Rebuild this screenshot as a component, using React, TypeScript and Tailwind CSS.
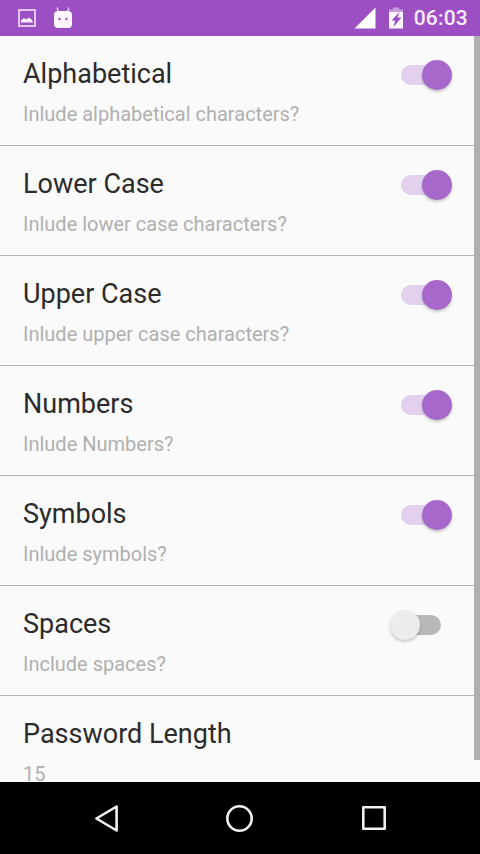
import React from "react";

const rows = [
  { title: "Alphabetical", sub: "Inlude alphabetical characters?", on: true },
  { title: "Lower Case", sub: "Inlude lower case characters?", on: true },
  { title: "Upper Case", sub: "Inlude upper case characters?", on: true },
  { title: "Numbers", sub: "Inlude Numbers?", on: true },
  { title: "Symbols", sub: "Inlude symbols?", on: true },
  { title: "Spaces", sub: "Include spaces?", on: false },
];

const Toggle = ({ on }: { on: boolean }) => (
  <div className="relative w-[62px] h-[32px] shrink-0">
    <div
      className={`absolute top-[5px] left-[11px] h-[20px] w-[40px] rounded-full ${
        on ? "bg-[#e3d0ed]" : "bg-[#b8b8b8]"
      }`}
    />
    <div
      className={`absolute top-0 w-[30px] h-[30px] rounded-full shadow-[0_2px_3px_rgba(0,0,0,0.2)] ${
        on ? "left-[31.5px] bg-[#a768cb]" : "left-0 bg-[#ececec]"
      }`}
    />
  </div>
);

const Row = ({ title, sub, on }: { title: string; sub: string; on: boolean }) => (
  <div className="h-[110px] shrink-0 border-b border-[#b4b4b4] pl-[23px] pr-[28px] flex justify-between">
    <div>
      <div className="mt-[20px] text-[27px] leading-[36px] text-[#2b2b2b]">{title}</div>
      <div className="mt-[8px] text-[20px] leading-[28px] text-[#b0b0b0]">{sub}</div>
    </div>
    <div className="mt-[23.5px]">
      <Toggle on={on} />
    </div>
  </div>
);

export default function App() {
  return (
    <div className="relative w-[480px] h-[854px] flex flex-col overflow-hidden bg-[#fafafa] font-['Roboto',sans-serif]">
      {/* status bar */}
      <div className="h-[36px] shrink-0 bg-[#9c4fc3] flex items-center justify-between pl-[18px] pr-[12px]">
        <div className="flex items-center gap-[18px]">
          <svg width="18" height="18" viewBox="0 0 18 18">
            <rect x="1" y="1" width="16" height="16" fill="none" stroke="#f3e3fa" strokeWidth="1.6" />
            <path d="M3 13.5 L3 11.5 L6 9 L8 10.5 L11 8.5 L14 11 L15 13.5 Z" fill="#f8effc" />
          </svg>
          <svg width="18" height="22" viewBox="0 0 18 22">
            <path d="M4.5 5 L3 0.5 M13.5 5 L15 0.5" stroke="#e6cff2" strokeWidth="1.4" />
            <path d="M0 8 Q0 4 4 4 L14 4 Q18 4 18 8 L18 17 Q18 21 14 21 L4 21 Q0 21 0 17 Z" fill="#fbf6fd" />
            <circle cx="5.5" cy="12" r="1.2" fill="#9c4fc3" />
            <circle cx="12.5" cy="12" r="1.2" fill="#9c4fc3" />
          </svg>
        </div>
        <div className="flex items-center">
          <svg width="22" height="22" viewBox="0 0 22 22" className="mr-[13px]">
            <path d="M0.5 21.5 L21.5 0.5 L21.5 21.5 Z" fill="#ffffff" />
          </svg>
          <svg width="14" height="22" viewBox="0 0 14 22" className="mr-[11px]">
            <path d="M4 0.5 H10 V2.5 H14 V5 H0 V2.5 H4 Z" fill="#c79be0" />
            <path d="M0 5 H14 V21.5 H0 Z" fill="#fbf6fd" />
            <path d="M10.5 5 L2.5 13.5 H6 L4.5 20 L12.5 10.5 H8.5 Z" fill="#9c4fc3" />
          </svg>
          <span className="text-[21px] leading-[36px] font-medium text-[#f6ecfb] tracking-[0.2px]">06:03</span>
        </div>
      </div>

      {/* settings list */}
      <div className="relative flex-1 overflow-hidden">
        {rows.map((r) => (
          <Row key={r.title} title={r.title} sub={r.sub} on={r.on} />
        ))}
        <div className="pl-[23px]">
          <div className="mt-[20px] text-[27px] leading-[36px] text-[#2b2b2b]">Password Length</div>
          <div className="mt-[8px] text-[20px] leading-[28px] text-[#b0b0b0]">15</div>
        </div>
        <div className="absolute top-0 right-0 w-[6px] h-[724px] bg-[#b0b0b0]" />
      </div>

      {/* nav bar */}
      <div className="h-[72px] shrink-0 bg-black flex items-center justify-between pl-[95px] pr-[94px]">
        <svg width="23" height="27" viewBox="0 0 23 27" fill="none" stroke="#f2f2f2" strokeWidth="2.6" strokeLinejoin="round">
          <path d="M21.6 1.5 V25.5 L1.4 13.5 Z" />
        </svg>
        <svg width="27" height="27" viewBox="0 0 27 27" fill="none" stroke="#f2f2f2" strokeWidth="2.6" className="ml-[-1px]">
          <circle cx="13.5" cy="13.5" r="12.2" />
        </svg>
        <svg width="24" height="24" viewBox="0 0 24 24" fill="none" stroke="#f2f2f2" strokeWidth="2.6" strokeLinejoin="round">
          <rect x="1.3" y="1.3" width="21.4" height="21.4" />
        </svg>
      </div>
    </div>
  );
}
